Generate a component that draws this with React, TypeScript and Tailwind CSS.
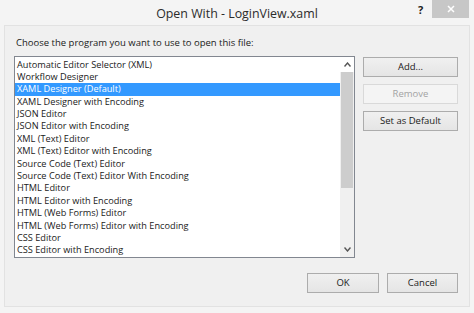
const items = [
  'Automatic Editor Selector (XML)',
  'Workflow Designer',
  'XAML Designer (Default)',
  'XAML Designer with Encoding',
  'JSON Editor',
  'JSON Editor with Encoding',
  'XML (Text) Editor',
  'XML (Text) Editor with Encoding',
  'Source Code (Text) Editor',
  'Source Code (Text) Editor With Encoding',
  'HTML Editor',
  'HTML Editor with Encoding',
  'HTML (Web Forms) Editor',
  'HTML (Web Forms) Editor with Encoding',
  'CSS Editor',
  'CSS Editor with Encoding',
]

const Button = ({ label, disabled }: { label: string; disabled?: boolean }) => (
  <div
    className={
      disabled
        ? 'flex h-[20px] w-[95px] items-center justify-center border border-[#d9d9d9] bg-[#f4f4f4] text-[#a3a3a3]'
        : 'flex h-[20px] w-[95px] items-center justify-center border border-[#acacac] bg-gradient-to-b from-[#f0f0f0] to-[#e5e5e5] text-[#1a1a1a]'
    }
  >
    {label}
  </div>
)

const App = () => {
  return (
    <div
      className="flex h-[313px] w-[474px] flex-col bg-[#f4f4f4] text-[9.5px] text-[#1a1a1a]"
      style={{ fontFamily: '"Open Sans", "Noto Sans", sans-serif' }}
    >
      {/* title bar */}
      <div className="relative flex h-[25px] items-center justify-center pt-[3px]">
        <span className="text-[12.4px] text-[#2b2b2b]">Open With - LoginView.xaml</span>
        <span className="absolute left-[418px] top-[2px] text-[11px] font-bold text-[#222]">?</span>
        <div className="absolute left-[432px] top-0 flex h-[18px] w-[37px] items-center justify-center bg-[#c7c7c7]">
          <svg width="8" height="8" viewBox="0 0 8 8">
            <path d="M1 1 L7 7 M7 1 L1 7" stroke="#fff" strokeWidth="1.5" />
          </svg>
        </div>
      </div>

      {/* panel */}
      <div className="mx-[4px] mb-[6px] flex flex-1 flex-col border border-[#e2e2e2] bg-[#f0f0f0] pl-[9px] pr-[11px]">
        <div className="pt-[10px] pl-[2px] leading-[14px]">Choose the program you want to use to open this file:</div>
        <div className="mt-[6px] flex gap-[8px]">
          <div className="flex h-[202px] w-[341px] border border-[#828790] bg-white">
            <div className="flex-1 pt-[1.5px] text-[9.2px]">
              {items.map((it, i) => (
                <div
                  key={it}
                  className={
                    i === 2
                      ? 'h-[12.4px] bg-[#3399ff] pl-[2px] leading-[12.4px] text-white'
                      : 'h-[12.4px] pl-[2px] leading-[12.4px]'
                  }
                >
                  {it}
                </div>
              ))}
            </div>
            <div className="flex w-[14px] flex-col bg-[#f0f0f0]">
              <div className="flex h-[15px] items-center justify-center bg-white">
                <svg width="7" height="5" viewBox="0 0 7 5">
                  <path d="M0.5 4.5 L3.5 1 L6.5 4.5" stroke="#555" strokeWidth="1.4" fill="none" />
                </svg>
              </div>
              <div className="mx-[1px] h-[116px] bg-[#cdcdcd]" />
              <div className="flex-1" />
              <div className="flex h-[15px] items-center justify-center">
                <svg width="7" height="5" viewBox="0 0 7 5">
                  <path d="M0.5 0.5 L3.5 4 L6.5 0.5" stroke="#555" strokeWidth="1.4" fill="none" />
                </svg>
              </div>
            </div>
          </div>
          <div className="flex flex-col gap-[7px] pt-[1px]">
            <Button label="Add..." />
            <Button label="Remove" disabled />
            <Button label="Set as Default" />
          </div>
        </div>
        <div className="mt-auto mb-[13px] flex justify-end gap-[8px]">
          <div className="flex h-[20px] w-[72px] items-center justify-center border border-[#acacac] bg-gradient-to-b from-[#f0f0f0] to-[#e5e5e5]">
            OK
          </div>
          <div className="flex h-[20px] w-[71px] items-center justify-center border border-[#acacac] bg-gradient-to-b from-[#f0f0f0] to-[#e5e5e5]">
            Cancel
          </div>
        </div>
      </div>
    </div>
  )
}

export default App
